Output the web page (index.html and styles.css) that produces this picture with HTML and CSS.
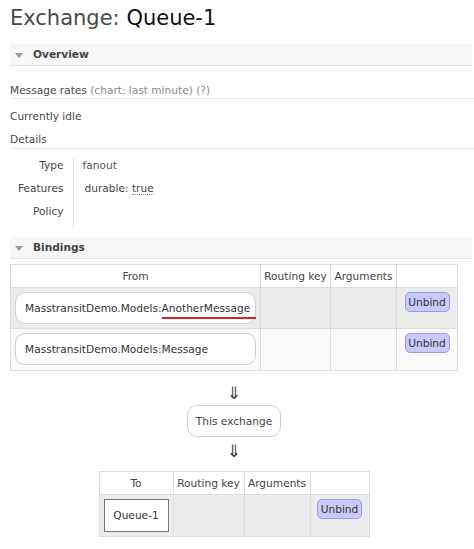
FILE: index.html
```html
<!DOCTYPE html>
<html>
<head>
<meta charset="utf-8">
<link rel="stylesheet" href="styles.css">
</head>
<body>
<h1 class="title"><span class="title-lbl">Exchange:</span> <span class="title-name">Queue-1</span></h1>

<div class="sec-head"><span class="tri"></span>Overview</div>
<div class="sub first">Message rates <span class="hint">(chart: last minute) (?)</span></div>
<div class="idle">Currently idle</div>
<div class="sub">Details</div>
<table class="facts">
  <tr><th>Type</th><td>fanout</td></tr>
  <tr><th>Features</th><td><span class="feat">durable: <abbr class="true">true</abbr></span></td></tr>
  <tr><th>Policy</th><td></td></tr>
</table>

<div class="sec-head bind-head"><span class="tri"></span>Bindings</div>
<div class="bindings">
  <table class="list big">
    <colgroup><col class="c-from"><col class="c-rk"><col class="c-args"><col class="c-btn"></colgroup>
    <thead><tr><th>From</th><th>Routing key</th><th>Arguments</th><th></th></tr></thead>
    <tbody>
      <tr class="alt1"><td><span class="exch">MasstransitDemo.Models:<span class="mark">AnotherMessage</span></span></td><td></td><td></td><td class="btn-cell"><button class="unbind">Unbind</button></td></tr>
      <tr class="alt2"><td><span class="exch">MasstransitDemo.Models:Message</span></td><td></td><td></td><td class="btn-cell"><button class="unbind">Unbind</button></td></tr>
    </tbody>
  </table>
  <div class="arrow">⇓</div>
  <div class="this-ex">This exchange</div>
  <div class="arrow arrow2">⇓</div>
  <table class="list small">
    <colgroup><col class="c-to"><col class="c-rk2"><col class="c-args2"><col class="c-btn2"></colgroup>
    <thead><tr><th>To</th><th>Routing key</th><th>Arguments</th><th></th></tr></thead>
    <tbody>
      <tr class="alt1"><td><span class="queue">Queue-1</span></td><td></td><td></td><td class="btn-cell"><button class="unbind">Unbind</button></td></tr>
    </tbody>
  </table>
</div>
</body>
</html>
```

FILE: styles.css
```css
body {
  margin: 0;
  padding: 0 0 0 10px;
  font-family: "DejaVu Sans", Verdana, sans-serif;
  font-size: 10.6px;
  color: #484848;
  background: #fff;
}

.title {
  margin: 0;
  padding-top: 4px;
  font-size: 21px;
  font-weight: normal;
  line-height: 28px;
}
.title-lbl { color: #4a4a4a; }
.title-name { color: #111; }

.sec-head {
  margin-top: 12px;
  margin-right: 2px;
  height: 21px;
  line-height: 21px;
  background: #f7f7f7;
  border-bottom: 1px solid #e2e2e2;
  font-weight: bold;
  color: #444;
  display: flex;
  align-items: center;
}
.tri {
  width: 0;
  height: 0;
  border-left: 4px solid transparent;
  border-right: 4px solid transparent;
  border-top: 5px solid #999;
  margin: 1px 10px 0 5px;
}

.sub {
  line-height: 14px;
  padding-bottom: 2px;
  border-bottom: 1px solid #e6e6e6;
  margin-top: 9px;
}
.sub.first { margin-top: 17px; padding-bottom: 1px; }
.hint { color: #8a8a8a; }
.idle {
  line-height: 14px;
  margin-top: 10px;
}

.facts {
  border-collapse: collapse;
  margin-top: 9px;
}
.facts th, .facts td {
  height: 23px;
  padding: 0;
  line-height: 14px;
  vertical-align: top;
  font-weight: normal;
  box-sizing: border-box;
}
.facts th {
  width: 63px;
  text-align: right;
  padding-right: 9px;
  border-right: 1px solid #ddd;
  color: #444;
}
.facts td {
  padding-left: 9px;
  color: #555;
}
.feat { padding-left: 2px; color: #444; }
.true {
  text-decoration: none;
  border-bottom: 1px dotted #888;
}

.bind-head { margin-top: 10px; }

.bindings {
  display: inline-flex;
  flex-direction: column;
  align-items: center;
  margin-top: 5px;
}

.list {
  border-collapse: collapse;
  table-layout: fixed;
}
.list th, .list td {
  border: 1px solid #dcdcdc;
  padding: 0;
  box-sizing: border-box;
}
.list th {
  height: 23px;
  font-weight: normal;
  color: #444;
  background: #fff;
  text-align: center;
}
.big { width: 447px; }
.c-from { width: 250px; }
.c-rk { width: 70px; }
.c-args { width: 66px; }
.c-btn { width: 61px; }
.small { width: 270px; }
.c-to { width: 74px; }
.c-rk2 { width: 71px; }
.c-args2 { width: 66px; }
.c-btn2 { width: 59px; }

.list td { vertical-align: top; padding: 4px; }
.alt1 td { background: #ececec; height: 41px; }
.alt2 td { background: #f9f9f9; height: 42px; }

.exch {
  display: block;
  height: 32px;
  line-height: 30px;
  box-sizing: border-box;
  padding: 0 9px;
  background: #fff;
  border: 1px solid #cfcfcf;
  border-radius: 10px;
  color: #333;
  white-space: nowrap;
}
.mark {
  border-bottom: 2px solid #d22;
  padding-bottom: 3px;
  padding-right: 6px;
}

.btn-cell { text-align: center; }
.unbind {
  margin-top: 0;
  width: 45px;
  height: 20px;
  padding: 0;
  font-family: "DejaVu Sans", Verdana, sans-serif;
  font-size: 10.6px;
  color: #333;
  background: #c9c9fb;
  border: 1px solid #9c9cdc;
  border-radius: 5px;
}

.arrow {
  font-size: 17px;
  line-height: 18px;
  margin-top: 13px;
  color: #333;
}
.arrow2 { margin-top: 5px; }
.this-ex {
  margin-top: 3px;
  width: 94px;
  height: 32px;
  line-height: 30px;
  box-sizing: border-box;
  border: 1px solid #cfcfcf;
  border-radius: 10px;
  text-align: center;
  color: #444;
}
.small { margin-top: 11px; }

.queue {
  display: block;
  width: 65px;
  height: 33px;
  line-height: 31px;
  box-sizing: border-box;
  border: 1px solid #777;
  background: #fff;
  text-align: center;
  color: #333;
}
```
